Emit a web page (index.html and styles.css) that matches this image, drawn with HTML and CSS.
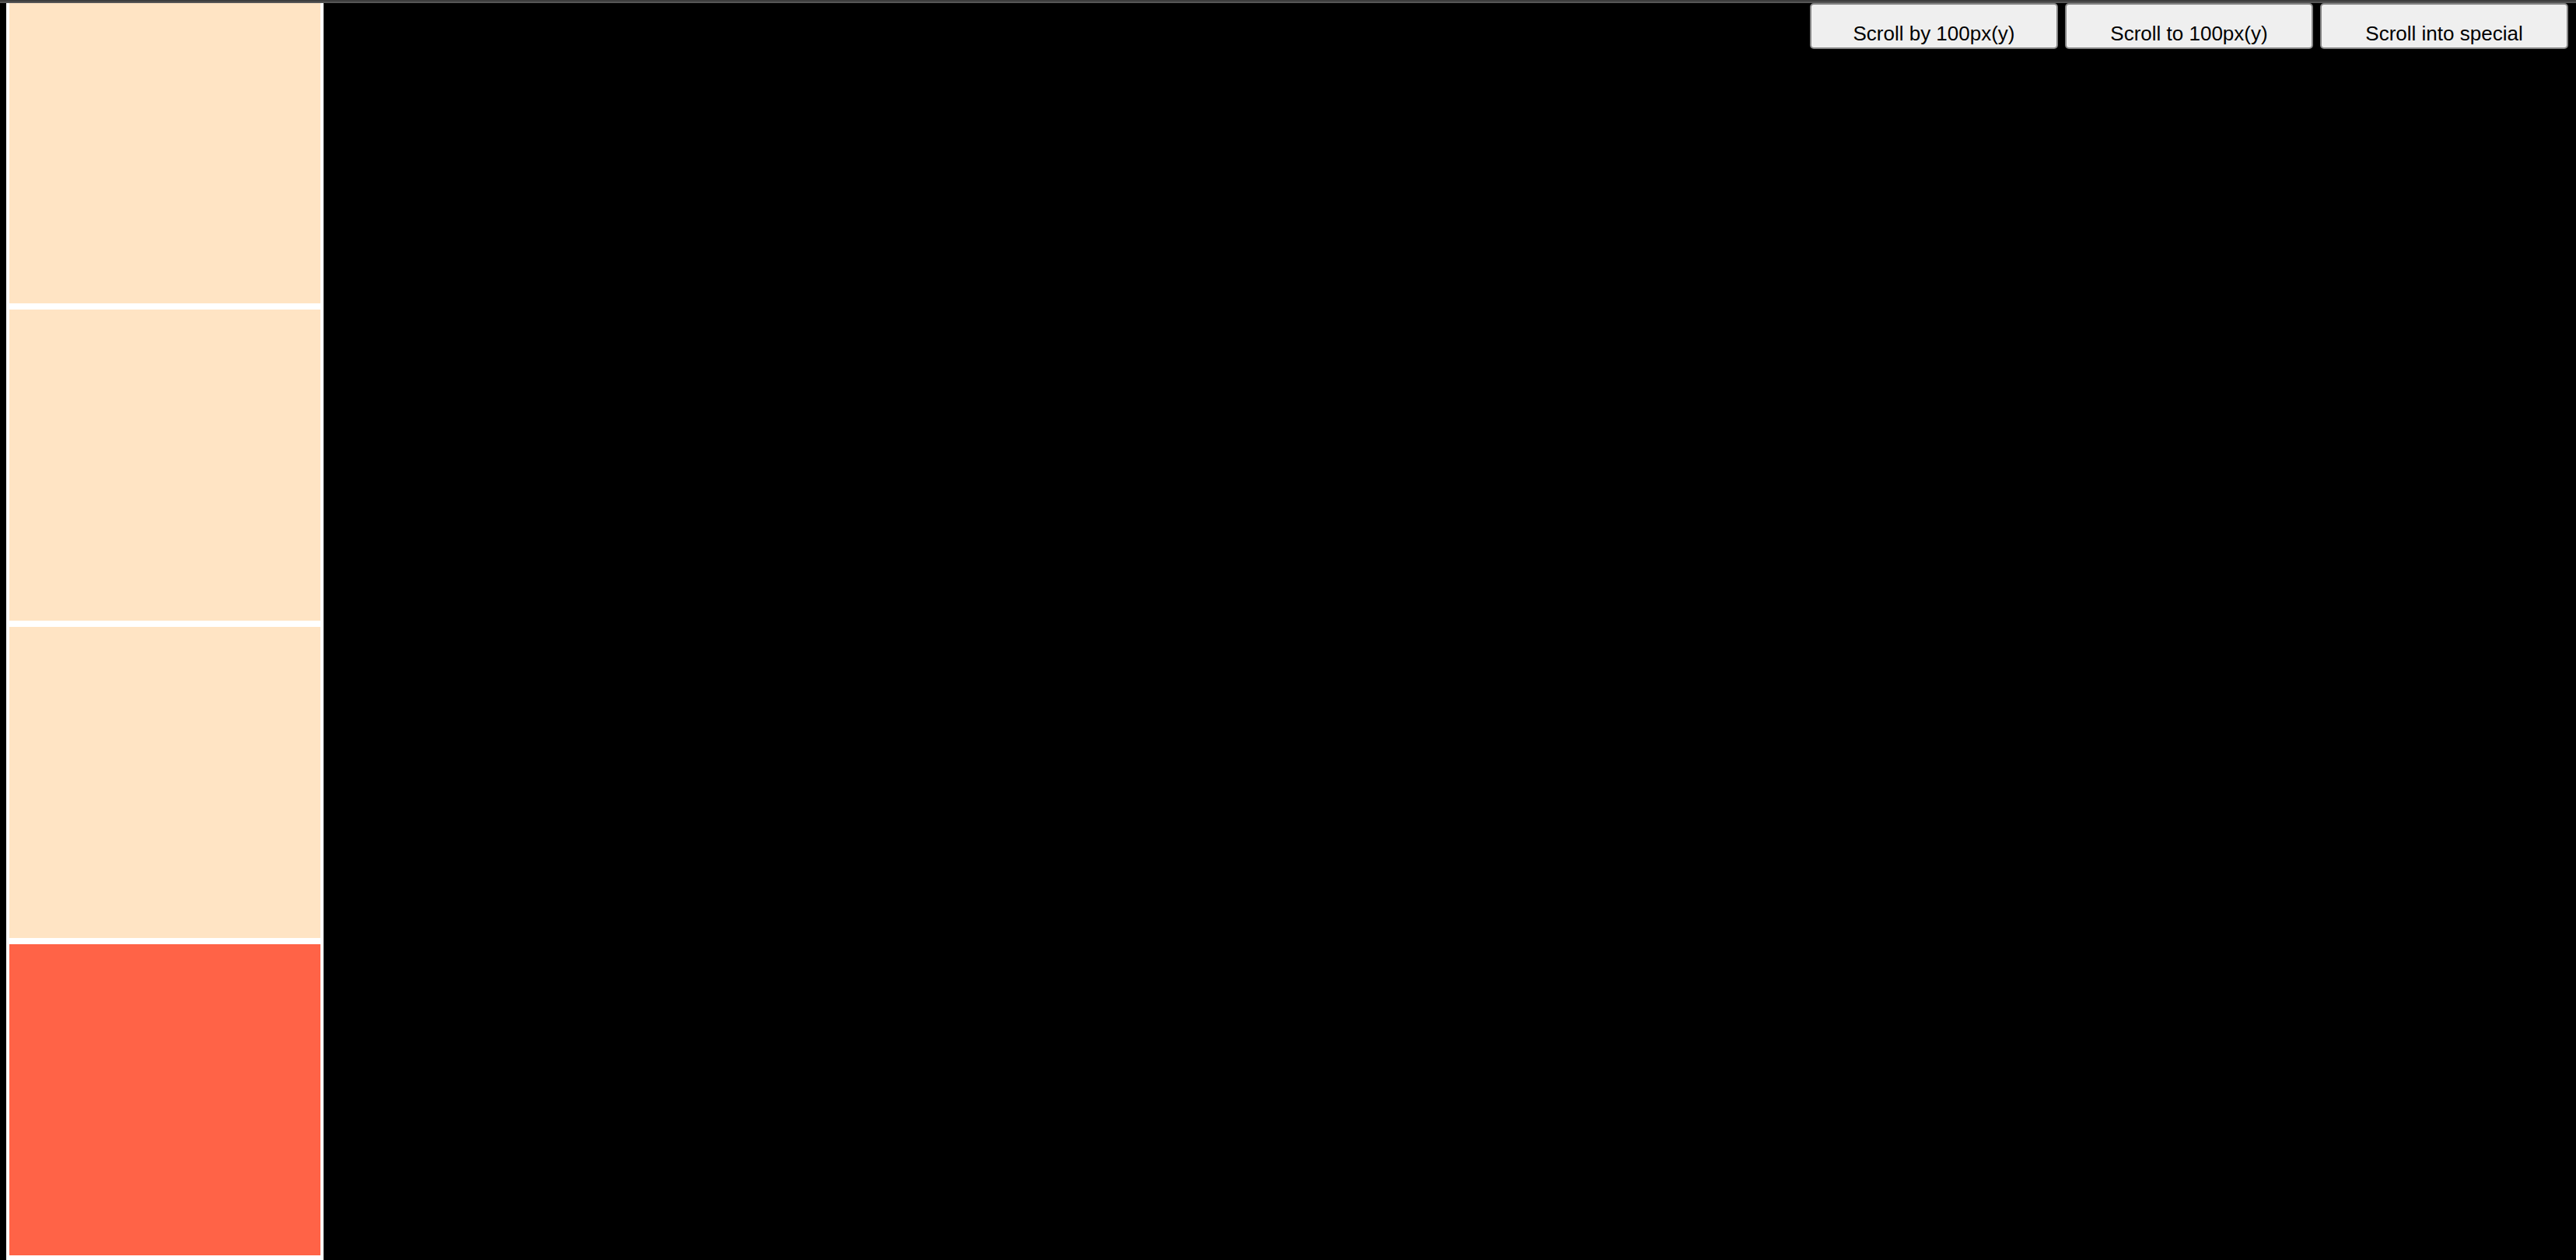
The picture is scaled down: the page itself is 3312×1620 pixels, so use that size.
FILE: index.html
```html
<!DOCTYPE html>
<html lang="en">
<head>
<meta charset="utf-8">
<title>Scroll test</title>
<link rel="stylesheet" href="styles.css">
</head>
<body>
<div class="topbar"></div>
<div class="page">
  <div class="panel">
    <div class="list">
      <div class="box"></div>
      <div class="box"></div>
      <div class="box"></div>
      <div class="box special"></div>
    </div>
  </div>
  <div class="toolbar">
    <button class="btn" type="button">Scroll by 100px(y)</button>
    <button class="btn" type="button">Scroll to 100px(y)</button>
    <button class="btn" type="button">Scroll into special</button>
  </div>
</div>
</body>
</html>
```

FILE: styles.css
```css
html, body {
  margin: 0;
  padding: 0;
  background: #000;
  height: 1620px;
  overflow: hidden;
}

.topbar {
  height: 2px;
  background: #3d3d3d;
  border-bottom: 2px solid #555555;
}

.page {
  display: flex;
  justify-content: space-between;
  align-items: flex-start;
  height: 1616px;
}

.panel {
  margin-left: 8px;
  width: 408px;
  height: 1616px;
  background: #fff;
  overflow: hidden;
}

.list {
  margin-top: -18px;
  display: flex;
  flex-direction: column;
}

.box {
  width: 400px;
  height: 400px;
  margin: 4px;
  background: #ffe4c4;
  flex: none;
}

.box.special {
  background: #ff6347;
}

.toolbar {
  display: flex;
  gap: 9px;
  margin-right: 10px;
}

.btn {
  box-sizing: border-box;
  width: 319px;
  height: 59px;
  padding: 22px 0 0;
  margin: 0;
  border: 2px solid #858585;
  border-radius: 5px;
  background: #efefef;
  color: #000;
  font-family: "Liberation Sans", Arial, sans-serif;
  font-size: 26px;
  line-height: 30px;
  text-align: center;
  display: flex;
  justify-content: center;
  align-items: flex-start;
}
```
